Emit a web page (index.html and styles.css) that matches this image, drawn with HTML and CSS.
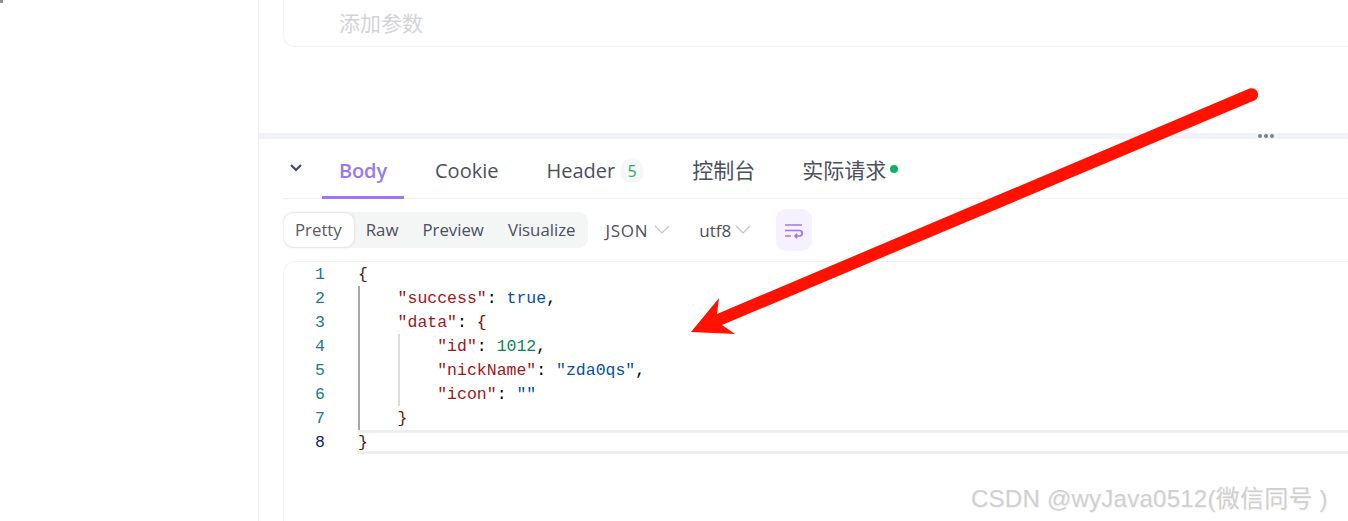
FILE: index.html
```html
<!DOCTYPE html>
<html lang="zh">
<head>
<meta charset="utf-8">
<title>Response</title>
<link rel="stylesheet" href="styles.css">
</head>
<body>
<div class="corner"></div>
<aside class="sidebar"></aside>
<main class="main">
  <section class="params">
    <div class="card"><span class="add">添加参数</span></div>
  </section>
  <div class="divider"><span class="dots"><i></i><i></i><i></i></span></div>
  <section class="response">
    <div class="tabs-row">
      <svg class="collapse" width="14" height="10" viewBox="0 0 14 10"><path d="M2 2l5 5 5-5" fill="none" stroke="#44475a" stroke-width="2.2"/></svg>
      <nav class="tabs">
        <a class="tab active">Body</a>
        <a class="tab cookie">Cookie</a>
        <a class="tab header">Header<span class="badge">5</span></a>
        <a class="tab console">控制台</a>
        <a class="tab actual">实际请求<span class="dot"></span></a>
      </nav>
    </div>
    <div class="toolbar">
      <div class="segments">
        <span class="seg on">Pretty</span>
        <span class="seg">Raw</span>
        <span class="seg">Preview</span>
        <span class="seg">Visualize</span>
      </div>
      <span class="select json"><span class="json-label">JSON</span><svg class="chev" width="16" height="10" viewBox="0 0 16 10"><path d="M1 1l7 7 7-7" fill="none" stroke="#c4c4c8" stroke-width="1.2"/></svg></span>
      <span class="select utf">utf8<svg class="chev" width="16" height="10" viewBox="0 0 16 10"><path d="M1 1l7 7 7-7" fill="none" stroke="#c4c4c8" stroke-width="1.2"/></svg></span>
      <button class="wrap"><svg class="wrap-icon" width="20" height="16" viewBox="0 0 20 16"><path d="M1 3h17M1 8.500h14.500a2.750 2.750 0 0 1 0 5.500H11M13.200 11.800L11 14l2.200 2.200M1 14h6" fill="none" stroke="#9b78ee" stroke-width="1.700"/></svg></button>
    </div>
    <div class="editor">
      <div class="gutter">
        <div>1</div><div>2</div><div>3</div><div>4</div><div>5</div><div>6</div><div>7</div><div class="cur">8</div>
      </div>
      <div class="code">
        <div class="guide g1"></div>
        <div class="guide g2"></div>
        <div class="ln"><span class="br">{</span></div>
        <div class="ln">    <span class="k">"success"</span><span class="p">:</span> <span class="b">true</span><span class="p">,</span></div>
        <div class="ln">    <span class="k">"data"</span><span class="p">:</span> <span class="br2">{</span></div>
        <div class="ln">        <span class="k">"id"</span><span class="p">:</span> <span class="n">1012</span><span class="p">,</span></div>
        <div class="ln">        <span class="k">"nickName"</span><span class="p">:</span> <span class="s">"zda0qs"</span><span class="p">,</span></div>
        <div class="ln">        <span class="k">"icon"</span><span class="p">:</span> <span class="s">""</span></div>
        <div class="ln">    <span class="br2">}</span></div>
        <div class="ln last"><span class="br">}</span></div>
      </div>
    </div>
  </section>
</main>
<svg class="arrow" width="1348" height="521" viewBox="0 0 1348 521"><path d="M1249.500 88.500A6.500 6.500 0 0 1 1254.800 100.300L722 325 735 334 691 332 719 298 717 314Z" fill="#ff1200"/></svg>
<div class="watermark">CSDN @wyJava0512(微信同号 )</div>
</body>
</html>
```
FILE: styles.css
```css
* { box-sizing: border-box; }
html, body { margin: 0; padding: 0; height: 100%; overflow: hidden; }
body {
  position: relative;
  display: flex;
  width: 1348px;
  height: 521px;
  background: #fff;
  font-family: "Open Sans", "Noto Sans", "Noto Sans CJK SC", sans-serif;
  color: #4b4f5e;
}
.corner { position: absolute; left: 0; top: 0; width: 3px; height: 3px; background: #8a8d99; }
.sidebar { flex: 0 0 259px; border-right: 1px solid #f0f0f4; }
.main { flex: 1; min-width: 0; display: flex; flex-direction: column; }
.params { flex: none; height: 133px; padding-left: 24px; }
.card {
  height: 47px;
  padding: 9px 0 0 55px;
  border: 1px solid #f3f3f5;
  border-top: 0;
  border-right: 0;
  border-radius: 0 0 0 12px;
}
.add { font: 21px/27px "Noto Sans CJK SC", sans-serif; color: #d4d4d6; }
.divider { flex: none; height: 6px; background: #f2f3f7; display: flex; justify-content: flex-end; align-items: center; padding-right: 74px; }
.dots { display: flex; gap: 2px; }
.dots i { width: 4px; height: 4px; border-radius: 50%; background: #7a7e8e; }
.response { flex: 1; min-height: 0; padding-left: 24px; display: flex; flex-direction: column; }
.tabs-row { flex: none; height: 60px; display: flex; border-bottom: 1px solid #f2f2f4; position: relative; }
.collapse { position: absolute; left: 6px; top: 24px; }
.tabs { display: flex; margin-left: 39px; }
.tab { display: flex; align-items: center; height: 60px; padding: 6px 0 0; font-size: 20px; color: #4b4f5e; border-bottom: 3px solid transparent; }
.tab.active { width: 82px; justify-content: center; color: #9b78ee; font-weight: 600; letter-spacing: -.1px; border-bottom-color: #9b78ee; }
.cookie { margin-left: 31px; }
.header { margin-left: 48px; }
.console { margin-left: 48px; padding-top: 3px; font-family: "Noto Sans CJK SC", sans-serif; font-size: 21px; }
.actual { margin-left: 47px; padding-top: 3px; font-family: "Noto Sans CJK SC", sans-serif; font-size: 21px; }
.badge { display: inline-flex; align-items: center; justify-content: center; width: 24px; height: 24px; margin-left: 5px; border-radius: 50%; background: #f6f7f7; color: #1fae6d; font-size: 16px; }
.dot { width: 8px; height: 8px; margin-left: 4px; border-radius: 50%; background: #14b064; }
.toolbar { flex: none; display: flex; align-items: center; height: 62px; }
.segments { display: flex; align-items: center; height: 36px; margin-left: 1px; background: #f4f5f5; border-radius: 9px; }
.seg { display: block; font-size: 16.800px; line-height: 34px; padding: 0 12px; color: #4b4f5e; }
.seg.on { padding-left: 11px; background: #fff; border-radius: 9px; box-shadow: 0 0 3px rgba(0,0,0,.16); color: #5b5860; }
.select { display: flex; align-items: center; font-size: 17px; color: #4b4f5e; }
.json-label { letter-spacing: .7px; }
.json { margin-left: 18px; gap: 6px; }
.utf { margin-left: 29px; gap: 4px; }
.wrap { display: flex; align-items: center; justify-content: center; width: 36px; height: 42px; margin-left: 25px; padding: 0; border: 0; border-radius: 10px; background: #f5f1fe; }
.wrap-icon { overflow: visible; }
.editor {
  flex: 1;
  min-height: 0;
  display: flex;
  padding-top: 1px;
  border: 1px solid #f3f3f6;
  border-right: 0;
  border-bottom: 0;
  border-radius: 12px 0 0 0;
  font: 16.500px/24px "Liberation Mono", monospace;
}
.gutter { width: 74px; padding-right: 33px; text-align: right; color: #237893; }
.gutter .cur { color: #0b216f; }
.code { flex: 1; position: relative; color: #000; }
.ln { height: 24px; white-space: pre; position: relative; }
.ln.last::before {
  content: "";
  position: absolute;
  left: 0; right: 0; top: -1px; bottom: 1px;
  border-top: 3px solid #eeeeee;
  border-bottom: 3px solid #eeeeee;
}
.guide { position: absolute; }
.g1 { left: 0; top: 23px; height: 144px; width: 2px; background: #a8a8a8; }
.g2 { left: 40px; top: 71px; height: 72px; width: 2px; background: #dcdcdc; }
.k { color: #a31515; }
.p { color: #000; }
.b { color: #0451a5; }
.n { color: #098658; }
.s { color: #0451a5; }
.br { color: #4a2200; }
.br2 { color: #6a1500; }
.arrow { position: absolute; left: 0; top: 0; pointer-events: none; }
.watermark {
  position: absolute;
  left: 971px;
  top: 484px;
  font: 24px/30px "Liberation Sans", "Noto Sans CJK SC", sans-serif;
  letter-spacing: .25px;
  color: #d0d0d0;
  text-shadow: 1px 1px 1px rgba(0,0,0,.05);
  white-space: nowrap;
}
```
